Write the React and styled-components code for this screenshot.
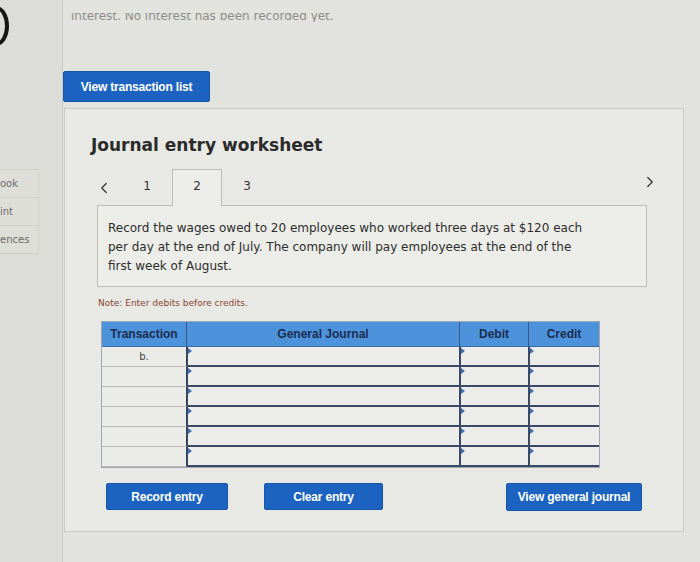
import styled, { createGlobalStyle } from "styled-components";
import { ChevronLeft, ChevronRight } from "lucide-react";

const Global = createGlobalStyle`
  html, body { margin: 0; padding: 0; }
  body { background: #e2e2de; font-family: "DejaVu Sans", Verdana, sans-serif; }
`

const Page = styled.div`
  width: 700px;
  height: 562px;
  display: flex;
  overflow: hidden;
`

const Rail = styled.div`
  width: 62px;
  flex-shrink: 0;
  display: flex;
  flex-direction: column;
  background: #dcdcd8;
  border-right: 1px solid #cacac6;
`

const Ring = styled.div`
  width: 18px;
  height: 32px;
  margin: 6px 0 0 -17px;
  border: 4px solid #151515;
  border-radius: 50%;
`

const SideNav = styled.div`
  margin-top: 123px;
  width: 38px;
  border: 1px solid #cfcfcb;
  border-left: none;
  background: #deded9;
`

const SideItem = styled.div`
  height: 27px;
  line-height: 27px;
  font-size: 10px;
  color: #6c6c6c;
  white-space: nowrap;
  border-bottom: ${(p) => (p.last ? "none" : "1px solid #cfcfcb")};
`

const Main = styled.div`
  flex: 1;
  display: flex;
  flex-direction: column;
  align-items: flex-start;
`

const CutLine = styled.div`
  margin-top: 13px;
  height: 9px;
  overflow: hidden;
  display: flex;
  align-items: flex-end;
  padding-left: 8px;
  font-size: 12px;
  line-height: 14px;
  color: #8d8d8b;
  white-space: nowrap;
  span { display: block; margin-bottom: -1px; }
`

const BlueButton = styled.button`
  width: ${(p) => p.w}px;
  height: ${(p) => p.h || 27}px;
  margin-left: ${(p) => p.ml || 0}px;
  background: #1c63c1;
  border: 1px solid #1656a8;
  border-radius: 2px;
  color: #fff;
  font-family: "Liberation Sans", Arial, sans-serif;
  font-weight: bold;
  font-size: 12px;
  letter-spacing: -0.2px;
  padding: 0;
  cursor: pointer;
`

const TopButton = styled(BlueButton)`
  margin-top: 49px;
`

const Panel = styled.div`
  margin: 6px 0 0 1px;
  width: 620px;
  height: 424px;
  box-sizing: border-box;
  background: #e8e8e4;
  border: 1px solid #c9c9c5;
  padding: 25px 0 0 0;
  display: flex;
  flex-direction: column;
`

const Title = styled.h2`
  margin: 0 0 0 26px;
  font-size: 17px;
  line-height: 22px;
  font-weight: bold;
  color: #2b2b2b;
`

const TabRow = styled.div`
  margin: 13px 0 -1px 30px;
  width: 564px;
  height: 37px;
  display: flex;
  align-items: stretch;
`

const Arrow = styled.div`
  width: 27px;
  display: flex;
  align-items: center;
  justify-content: ${(p) => (p.right ? "flex-end" : "flex-start")};
  margin-left: ${(p) => (p.right ? "auto" : "0")};
  padding-bottom: ${(p) => (p.right ? 12 : 0)}px;
  color: #333;
`

const Tab = styled.div`
  width: 50px;
  box-sizing: border-box;
  display: flex;
  align-items: center;
  justify-content: center;
  padding-bottom: 4px;
  font-size: 12px;
  color: #333;
  background: ${(p) => (p.active ? "#ecece8" : "transparent")};
  border: 1px solid ${(p) => (p.active ? "#bdbdb9" : "transparent")};
  border-bottom: none;
  position: relative;
  z-index: 1;
`

const Prompt = styled.div`
  margin-left: 32px;
  width: 550px;
  height: 82px;
  box-sizing: border-box;
  background: #ecece8;
  border: 1px solid #bdbdb9;
  padding: 13px 0 0 10px;
`

const PromptText = styled.p`
  margin: 0;
  width: 490px;
  font-size: 12px;
  line-height: 19px;
  color: #2e2e2e;
`

const Note = styled.div`
  margin: 11px 0 0 33px;
  font-size: 9px;
  line-height: 11px;
  color: #8a4434;
`

const Table = styled.div`
  margin: 12px 0 0 36px;
  width: 497px;
  display: grid;
  grid-template-columns: 85px 273px 69px 70px;
  grid-auto-rows: 20px;
  grid-template-rows: 25px;
  border: 1px solid #9ea7b3;
`

const Head = styled.div`
  background: #4d93dc;
  color: #1b2d4f;
  font-family: "Liberation Sans", Arial, sans-serif;
  font-weight: bold;
  font-size: 12px;
  display: flex;
  align-items: center;
  justify-content: center;
  border-right: ${(p) => (p.last ? "none" : "1px solid #33598e")};
  border-bottom: 1px solid #3d6aa5;
`

const TxCell = styled.div`
  background: #ebebe7;
  border-right: 1px solid #33415a;
  border-bottom: 1px solid #b9b9b5;
  font-size: 10px;
  color: #444;
  display: flex;
  align-items: center;
  justify-content: center;
`

const InputCell = styled.div`
  position: relative;
  background: #ececea;
  box-sizing: border-box;
  border-left: 1px solid #3b4966;
  border-right: ${(p) => (p.last ? "none" : "1px solid #3b4966")};
  border-bottom: 2px solid #3b4966;
  &::before {
    content: "";
    position: absolute;
    left: 0;
    top: 1px;
    border-top: 3px solid transparent;
    border-bottom: 3px solid transparent;
    border-left: 4px solid #3f6fb0;
  }
`

const ButtonRow = styled.div`
  margin: 15px 0 0 41px;
  display: flex;
  align-items: flex-start;
`

const rows = ["b.", "", "", "", "", ""]

export default function App() {
  return (
    <>
      <Global />
      <Page>
        <Rail>
          <Ring />
          <SideNav>
            <SideItem>ook</SideItem>
            <SideItem>int</SideItem>
            <SideItem last>ences</SideItem>
          </SideNav>
        </Rail>
        <Main>
          <CutLine>
            <span>interest. No interest has been recorded yet.</span>
          </CutLine>
          <TopButton w={147} h={31}>View transaction list</TopButton>
          <Panel>
            <Title>Journal entry worksheet</Title>
            <TabRow>
              <Arrow><ChevronLeft size={18} strokeWidth={1.6} /></Arrow>
              <Tab>1</Tab>
              <Tab active>2</Tab>
              <Tab>3</Tab>
              <Arrow right><ChevronRight size={18} strokeWidth={1.6} /></Arrow>
            </TabRow>
            <Prompt>
              <PromptText>
                Record the wages owed to 20 employees who worked three days at $120 each
                per day at the end of July. The company will pay employees at the end of the
                first week of August.
              </PromptText>
            </Prompt>
            <Note>Note: Enter debits before credits.</Note>
            <Table>
              {["Transaction", "General Journal", "Debit", "Credit"].map((h, i) => (
                <Head key={h} last={i === 3}>{h}</Head>
              ))}
              {rows.flatMap((r, i) => [
                <TxCell key={"t" + i}>{r}</TxCell>,
                <InputCell key={"g" + i} />,
                <InputCell key={"d" + i} />,
                <InputCell key={"c" + i} last />,
              ])}
            </Table>
            <ButtonRow>
              <BlueButton w={122}>Record entry</BlueButton>
              <BlueButton w={119} ml={36}>Clear entry</BlueButton>
              <BlueButton w={136} h={28} ml={123}>View general journal</BlueButton>
            </ButtonRow>
          </Panel>
        </Main>
      </Page>
    </>
  )
}
